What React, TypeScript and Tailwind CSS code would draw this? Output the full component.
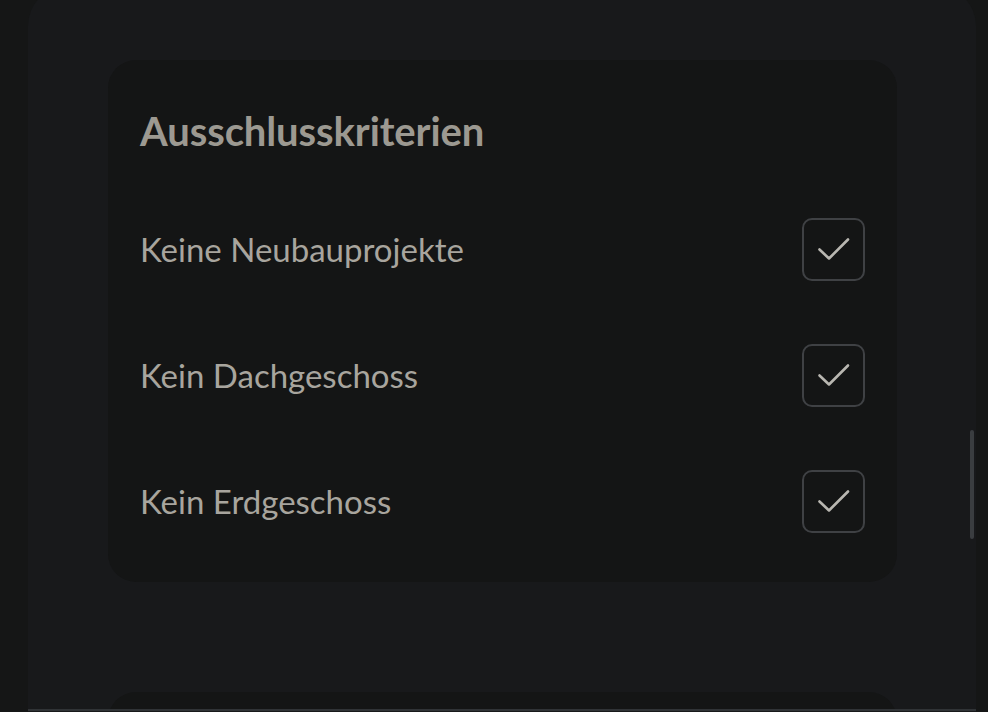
import React from 'react';

var kriterien = ['Keine Neubauprojekte', 'Kein Dachgeschoss', 'Kein Erdgeschoss'];

function CheckBox() {
  return (
    <div className="flex h-[63px] w-[63px] shrink-0 items-center justify-center rounded-[10px] border-2 border-[#3f4144]">
      <svg width="63" height="63" viewBox="0 0 63 63" fill="none" className="-m-[2px]">
        <polyline
          points="17.5,31.5 27,40.5 46,21.5"
          stroke="#b9b7b1"
          strokeWidth="2.6"
          strokeLinecap="round"
          strokeLinejoin="round"
        />
      </svg>
    </div>
  );
}

export default function App() {
  return (
    <div
      className="flex h-[712px] w-full overflow-hidden bg-[#151616]"
      style={{ fontFamily: 'Lato, "Open Sans", sans-serif' }}
    >
      <div className="w-[28px] shrink-0" />
      <div className="relative -mt-[14px] flex h-[726px] w-[948px] shrink-0 flex-col rounded-t-[40px] bg-[#18191b]">
        <div className="flex-1 overflow-hidden pl-[80px] pr-[79px] pt-[74px]">
          <section className="rounded-[28px] bg-[#141515] px-[32px] pb-[18px] pt-[40px]">
            <h2 className="text-[40px] font-bold leading-[62px] tracking-[-0.1px] text-[#9c9991]">
              Ausschlusskriterien
            </h2>
            <div className="mt-[24px] flex flex-col">
              {kriterien.map((k) => (
                <div key={k} className="flex h-[126px] items-center justify-between">
                  <span className="text-[33px] leading-none text-[#a8a59e]">{k}</span>
                  <CheckBox />
                </div>
              ))}
            </div>
          </section>
          <section className="mt-[110px] h-[300px] rounded-[28px] bg-[#141515]" />
        </div>
        <div className="h-[3px] border-t-2 border-[#303336]" />
        <div className="absolute right-[2px] top-[444px] h-[109px] w-[4px] rounded-full bg-[#3a3d40]" />
      </div>
      <div className="flex-1" />
    </div>
  );
}
